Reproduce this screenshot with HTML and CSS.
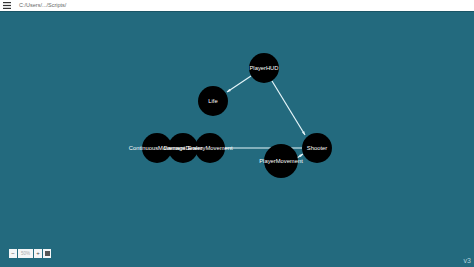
FILE: index.html
```html
<!DOCTYPE html>
<html>
<head>
<meta charset="utf-8">
<link rel="stylesheet" href="styles.css">
</head>
<body>
<div class="app">
  <header class="topbar">
    <svg class="menu" width="8" height="7" viewBox="0 0 8 7"><rect x="0" y="0" width="8" height="1.2" fill="#333"/><rect x="0" y="2.9" width="8" height="1.2" fill="#333"/><rect x="0" y="5.8" width="8" height="1.2" fill="#333"/></svg>
    <span class="path">C:/Users/.../Scripts/</span>
  </header>
  <main class="canvas">
    <svg class="graph" width="474" height="255" viewBox="0 12 474 255">
      <defs>
        <marker id="arr" viewBox="0 0 10 10" refX="9" refY="5" markerWidth="3.5" markerHeight="3.5" orient="auto">
          <path d="M0 2 L10 5 L0 8 Z" fill="#e6f6fa"/>
        </marker>
      </defs>
      <g class="edges">
        <line x1="251" y1="76" x2="227" y2="92" marker-end="url(#arr)"/>
        <line x1="272" y1="81" x2="305" y2="135" marker-end="url(#arr)"/>
        <line x1="222" y1="148" x2="302" y2="148"/>
        <line x1="294" y1="160" x2="303" y2="154" marker-end="url(#arr)"/>
      </g>
      <g class="nodes">
        <circle cx="157" cy="148" r="15"/>
        <circle cx="183" cy="148" r="15"/>
        <circle cx="210" cy="148" r="15"/>
        <circle cx="264" cy="68" r="15"/>
        <circle cx="213" cy="101" r="15"/>
        <circle cx="317" cy="148" r="15"/>
        <circle cx="281" cy="161" r="17"/>
      </g>
      <g class="labels">
        <text x="157" y="150">ContinuousMovement</text>
        <text x="183" y="150">DamageDealer</text>
        <text x="210" y="150">EnemyMovement</text>
        <text x="264" y="70">PlayerHUD</text>
        <text x="213" y="103">Life</text>
        <text x="317" y="150">Shooter</text>
        <text x="281" y="163">PlayerMovement</text>
      </g>
    </svg>
    <div class="zoom">
      <button class="zbtn">−</button>
      <button class="zbtn pct">50%</button>
      <button class="zbtn">+</button>
      <button class="zbtn fit"><span class="fiticon"></span></button>
    </div>
    <span class="version">v3</span>
  </main>
</div>
</body>
</html>
```
FILE: styles.css
```css
html, body {
  margin: 0;
  padding: 0;
}
body {
  width: 474px;
  height: 267px;
  overflow: hidden;
  font-family: "Liberation Sans", Arial, sans-serif;
}
.app {
  display: flex;
  flex-direction: column;
  height: 267px;
}
.topbar {
  height: 12px;
  flex: 0 0 12px;
  background: #ffffff;
  border-bottom: 1px solid #1b5566;
  box-sizing: border-box;
  display: flex;
  align-items: center;
  gap: 8px;
  padding-left: 3px;
}
.menu {
  display: block;
}
.path {
  font-size: 5.5px;
  color: #666;
  line-height: 1;
}
.canvas {
  flex: 1;
  position: relative;
  background: #236a7e;
}
.graph {
  display: block;
  position: absolute;
  left: 0;
  top: 0;
}
.edges line {
  stroke: #e6f6fa;
  stroke-width: 1.2;
}
.nodes circle {
  fill: #000;
}
.labels text {
  fill: #fff;
  font-size: 5.8px;
  text-anchor: middle;
  font-family: "Liberation Sans", Arial, sans-serif;
}
.zoom {
  position: absolute;
  left: 9px;
  bottom: 9px;
  display: flex;
  gap: 1px;
}
.zbtn {
  height: 9px;
  min-width: 8px;
  padding: 0 1px;
  margin: 0;
  border: none;
  background: #f4f6f7;
  color: #444;
  font-size: 6px;
  line-height: 9px;
  font-family: "Liberation Sans", Arial, sans-serif;
  display: flex;
  align-items: center;
  justify-content: center;
}
.zbtn.pct {
  width: 15px;
  color: #aaa;
  font-size: 4.5px;
}
.fiticon {
  width: 5px;
  height: 5px;
  background: #555;
  display: block;
}
.version {
  position: absolute;
  right: 3px;
  bottom: 3px;
  font-size: 7px;
  color: #b5d3dd;
}
```
